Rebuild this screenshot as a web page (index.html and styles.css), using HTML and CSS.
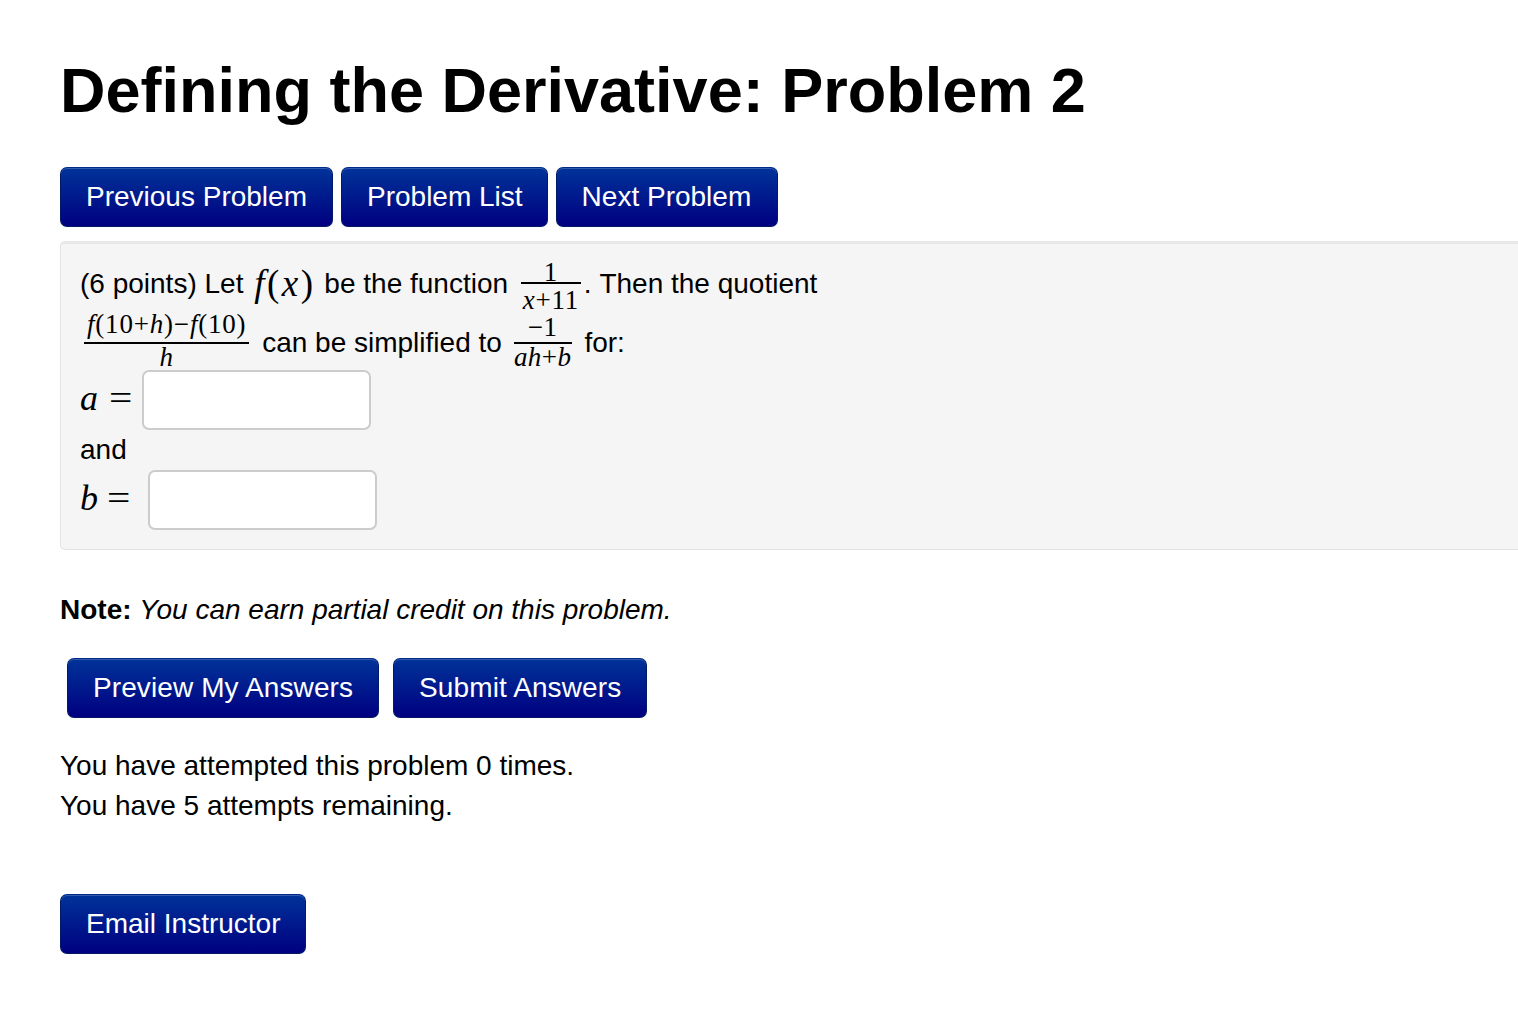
FILE: index.html
```html
<!DOCTYPE html>
<html lang="en">
<head>
<meta charset="utf-8">
<title>Defining the Derivative: Problem 2</title>
<link rel="stylesheet" href="styles.css">
</head>
<body>
<main class="page">
  <h1 class="title">Defining the Derivative: Problem 2</h1>
  <nav class="nav">
    <a class="btn">Previous Problem</a>
    <a class="btn btn-tight">Problem List</a>
    <a class="btn btn-wide">Next Problem</a>
  </nav>
  <section class="problem">
    <div class="line line-first">(6 points) Let <span class="math fx"><i>f</i>(<i>x</i>)</span> be the function <span class="frac frac-a"><span class="num">1</span><span class="den"><i>x</i>+11</span></span><span class="dot">.</span> Then the quotient</div>
    <div class="line line-second"><span class="frac frac-b"><span class="num"><i>f</i>(10+<i>h</i>)&minus;<i>f</i>(10)</span><span class="den"><i>h</i></span></span> can be simplified to <span class="frac frac-c"><span class="num">&minus;1</span><span class="den"><i>ah</i>+<i>b</i></span></span> for:</div>
    <div class="answer answer-a"><span class="math var"><i>a</i><span class="eq">=</span></span><input class="field" type="text" aria-label="a"></div>
    <div class="and">and</div>
    <div class="answer answer-b"><span class="math var"><i>b</i><span class="eq">=</span></span><input class="field" type="text" aria-label="b"></div>
  </section>
  <p class="note"><b>Note:</b> <i>You can earn partial credit on this problem.</i></p>
  <div class="actions">
    <button class="btn btn-spaced" type="button">Preview My Answers</button>
    <button class="btn btn-spaced" type="button">Submit Answers</button>
  </div>
  <p class="status">You have attempted this problem 0 times.<br>You have 5 attempts remaining.</p>
  <a class="btn btn-tight email">Email Instructor</a>
</main>
</body>
</html>
```
FILE: styles.css
```css
* { box-sizing: border-box; }
html, body { margin: 0; padding: 0; background: #fff; }
body {
  font-family: "Liberation Sans", Arial, sans-serif;
  font-size: 28px;
  line-height: 40px;
  color: #000;
  overflow-x: hidden;
}
.page { padding: 0 0 70px 60px; }
.title {
  margin: 0;
  padding-top: 50px;
  height: 167px;
  font-size: 63px;
  line-height: 80px;
  font-weight: 700;
}
.nav { display: flex; gap: 8px; height: 60px; }
.btn {
  display: inline-flex;
  align-items: center;
  height: 60px;
  padding: 0 25px;
  border: 1px solid #001a66;
  border-top-color: #002a8a;
  border-radius: 7px;
  background: linear-gradient(to bottom, #003399, #000080);
  box-shadow: inset 0 1px 0 rgba(255,255,255,.2);
  color: #fff;
  font: inherit;
  line-height: 40px;
}
.btn-tight { padding-right: 24px; }
.btn-wide { padding-right: 26px; }
.btn-spaced { letter-spacing: .1px; }
.problem {
  margin-top: 14px;
  height: 309px;
  padding: 20px 0 0 19px;
  background: #f5f5f5;
  border: 1px solid #e3e3e3;
  border-top: 3px solid #e8e8e8;
  border-right: 0;
  border-radius: 5px 0 0 5px;
}
.line { display: flex; align-items: center; white-space: pre-wrap; }
.line-first { height: 40px; }
.line-second { height: 60px; margin-top: 9px; padding-left: 4px; }
.math { font-family: "Liberation Serif", "DejaVu Serif", serif; }
.fx { font-size: 37px; letter-spacing: 2.5px; margin: 0 1px 0 3px; }
.var { display: flex; align-items: center; font-size: 36px; padding-bottom: 4px; }
.eq { margin-left: 11px; transform: scaleX(1.15); transform-origin: left; }
.answer-b .eq { margin-left: 9px; }
.frac {
  display: inline-flex;
  flex-direction: column;
  align-items: center;
  margin: 0 5px;
  font-family: "Liberation Serif", "DejaVu Serif", serif;
  font-size: 27px;
  line-height: 27px;
  letter-spacing: .8px;
}
.num { width: 100%; padding: 0 3px; border-bottom: 2px solid #000; text-align: center; white-space: nowrap; }
.den { padding: 0 1px; }
.frac-a { width: 60px; margin-top: 8px; }
.frac-a .num { line-height: 20px; }
.frac-a .den { padding-top: 3px; }
.frac-b { margin-left: 0; margin-bottom: 8px; }
.frac-b .num { line-height: 35px; }
.frac-c { width: 58px; margin-left: 4px; margin-bottom: 2px; letter-spacing: .4px; }
.frac-c .num { line-height: 29px; }
.dot { margin-left: -2px; }
.answer { display: flex; align-items: center; height: 60px; }
.answer-a { margin-top: -3px; }
.answer-a .var { width: 62px; }
.answer-b .var { width: 68px; }
.field {
  width: 229px;
  height: 60px;
  border: 2px solid #ccc;
  border-radius: 7px;
  background: #fff;
  padding: 0;
}
.and { height: 40px; }
.note { margin: 40px 0 0; height: 40px; }
.actions { display: flex; gap: 14px; margin: 28px 0 0 7px; height: 60px; }
.status { margin: 28px 0 0; }
.email { margin-top: 68px; }
```
